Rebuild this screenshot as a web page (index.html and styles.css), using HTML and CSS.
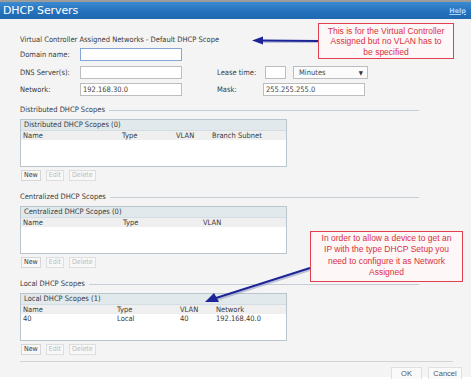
FILE: index.html
```html
<!DOCTYPE html>
<html>
<head>
<meta charset="utf-8">
<link rel="stylesheet" href="styles.css">
</head>
<body>
<div class="win">
  <div class="topstrip"></div>
  <div class="titlebar">
    <span class="title">DHCP Servers</span>
    <a class="help">Help</a>
  </div>
  <div class="panel">
    <div class="heading">Virtual Controller Assigned Networks - Default DHCP Scope</div>
    <div class="form">
      <div class="row">
        <span class="lbl">Domain name:</span><span class="inp focus"></span>
      </div>
      <div class="row">
        <span class="lbl">DNS Server(s):</span><span class="inp"></span>
        <span class="lbl2">Lease time:</span><span class="inp small"></span>
        <span class="select">Minutes<span class="caret">▼</span></span>
      </div>
      <div class="row">
        <span class="lbl">Network:</span><span class="inp">192.168.30.0</span>
        <span class="lbl2">Mask:</span><span class="inp">255.255.255.0</span>
      </div>
    </div>

    <div class="group first">
      <div class="legend"><span>Distributed DHCP Scopes</span><span class="rule"></span></div>
      <div class="grid">
        <div class="gtitle">Distributed DHCP Scopes (0)</div>
        <div class="ghead cols-dist"><span>Name</span><span>Type</span><span>VLAN</span><span>Branch Subnet</span></div>
      </div>
      <div class="btns"><span class="btn">New</span><span class="btn dis">Edit</span><span class="btn dis">Delete</span></div>
    </div>

    <div class="group">
      <div class="legend"><span>Centralized DHCP Scopes</span><span class="rule"></span></div>
      <div class="grid">
        <div class="gtitle">Centralized DHCP Scopes (0)</div>
        <div class="ghead cols-cent"><span>Name</span><span>Type</span><span>VLAN</span></div>
      </div>
      <div class="btns"><span class="btn">New</span><span class="btn dis">Edit</span><span class="btn dis">Delete</span></div>
    </div>

    <div class="group">
      <div class="legend"><span>Local DHCP Scopes</span><span class="rule"></span></div>
      <div class="grid">
        <div class="gtitle">Local DHCP Scopes (1)</div>
        <div class="ghead cols-local"><span>Name</span><span>Type</span><span>VLAN</span><span>Network</span></div>
        <div class="grow cols-local"><span>40</span><span>Local</span><span>40</span><span>192.168.40.0</span></div>
      </div>
      <div class="btns"><span class="btn">New</span><span class="btn dis">Edit</span><span class="btn dis">Delete</span></div>
    </div>

    <div class="sep"></div>
    <div class="footer"><span class="fbtn">OK</span><span class="fbtn cancel">Cancel</span></div>
  </div>

  <div class="callout c1">This is for the Virtual Controller<br>Assigned but no VLAN has to<br>be specified</div>
  <div class="callout c2">In order to allow a device to get an<br>IP with the type DHCP Setup you<br>need to configure it as Network<br>Assigned</div>

  <svg class="arrows" width="474" height="379" viewBox="0 0 474 379">
    <g stroke="#8a8fb8" stroke-width="2" opacity="0.5" fill="none">
      <line x1="318" y1="42" x2="262" y2="42"/>
      <line x1="310" y1="270" x2="216" y2="300"/>
    </g>
    <g stroke="#1b2597" stroke-width="2" fill="none">
      <line x1="318" y1="41" x2="262" y2="40.5"/>
      <line x1="310" y1="268" x2="216" y2="298"/>
    </g>
    <g fill="#1b2597">
      <polygon points="252,40.5 263,36.5 263,44.5"/>
      <polygon points="205,302 214,293 219,302"/>
    </g>
  </svg>
</div>
</body>
</html>
```

FILE: styles.css
```css
html, body {
  margin: 0;
  padding: 0;
  background: #ffffff;
}

body {
  width: 474px;
  height: 379px;
  overflow: hidden;
  font-family: "DejaVu Sans Condensed", "Liberation Sans", sans-serif;
  font-size: 7.5px;
  color: #3a3a3a;
}

.win {
  position: relative;
  width: 471px;
  height: 377px;
  background: #f4f4f4;
}

.topstrip {
  height: 2px;
  background: #9c9c9c;
}

.titlebar {
  height: 17px;
  background: linear-gradient(#3b8ad1, #2470bb 60%, #1f68b2);
  display: flex;
  align-items: center;
  justify-content: space-between;
  padding: 0 5px 0 3px;
}

.title {
  font-family: "DejaVu Sans", sans-serif;
  font-size: 11px;
  color: #ffffff;
  letter-spacing: -0.1px;
}

.help {
  font-family: "DejaVu Sans", sans-serif;
  font-size: 6.5px;
  font-weight: bold;
  color: #a8d4ff;
  text-decoration: underline;
}

.panel {
  padding-left: 20px;
  display: flex;
  flex-direction: column;
}

.heading {
  margin-top: 16px;
  height: 10px;
  line-height: 10px;
}

.form {
  margin-top: 3px;
  display: flex;
  flex-direction: column;
  gap: 4.5px;
}

.row {
  height: 13px;
  display: flex;
  align-items: center;
}

.lbl {
  width: 60px;
}

.lbl2 {
  margin-left: 35px;
  width: 46px;
}

.inp {
  box-sizing: border-box;
  width: 102px;
  height: 13px;
  border: 1px solid #bdbdbd;
  background: #ffffff;
  line-height: 11px;
  padding-left: 2px;
  color: #444;
}

.inp.focus {
  border-color: #86a6d8;
}

.inp.small {
  width: 21px;
  margin-left: 2px;
}

.select {
  box-sizing: border-box;
  margin-left: 7px;
  width: 75px;
  height: 13px;
  border: 1px solid #bdbdbd;
  background: #fbfbfb;
  line-height: 11px;
  padding-left: 5px;
  padding-right: 4px;
  display: flex;
  justify-content: space-between;
  color: #444;
}

.caret {
  font-size: 6px;
  color: #333;
}

.group {
  margin-top: 11px;
  display: flex;
  flex-direction: column;
}

.group.first {
  margin-top: 9px;
}

.legend {
  width: 399px;
  height: 10px;
  line-height: 10px;
  display: flex;
  align-items: center;
}

.rule {
  flex: 1;
  height: 1px;
  margin-left: 4px;
  background: #c6cdd4;
}

.grid {
  box-sizing: border-box;
  margin-top: 4px;
  width: 267px;
  height: 48px;
  border: 1px solid #b9c5cc;
  background: #ffffff;
}

.gtitle {
  height: 10px;
  line-height: 10px;
  padding-left: 3px;
  background: #e1e9ec;
  border-bottom: 1px solid #d3dde2;
}

.ghead, .grow {
  height: 9px;
  line-height: 9px;
  padding-left: 2px;
  display: grid;
}

.ghead {
  background: #efefef;
}

.cols-dist { grid-template-columns: 99px 54px 36px 1fr; }
.cols-cent { grid-template-columns: 100px 80px 1fr; }
.cols-local { grid-template-columns: 94px 63px 36px 1fr; }

.btns {
  margin-top: 3px;
  margin-left: 1px;
  height: 11px;
  display: flex;
  gap: 5px;
}

.btn {
  box-sizing: border-box;
  height: 11px;
  line-height: 9px;
  padding: 0 2px;
  border: 1px solid #d6d6d6;
  background: #f8f8f8;
  color: #333;
  font-size: 7px;
}

.btn.dis {
  color: #bcbcbc;
  border-color: #dedede;
}

.sep {
  margin-top: 6px;
  width: 433px;
  height: 1px;
  background: #cfd4d8;
}

.footer {
  margin-top: 5px;
  width: 442px;
  display: flex;
  justify-content: flex-end;
  gap: 6px;
}

.fbtn {
  box-sizing: border-box;
  width: 31px;
  height: 12px;
  line-height: 11px;
  text-align: center;
  border: 1px solid #e0e0e0;
  border-bottom: none;
  background: #fafafa;
  color: #555;
  font-family: "Liberation Sans", sans-serif;
  font-size: 7.5px;
}

.fbtn.cancel {
  width: 34px;
}

.callout {
  position: absolute;
  box-sizing: border-box;
  border: 1px solid #e2404e;
  background: #fdf7f7;
  color: #d9303f;
  font-family: "Liberation Sans", sans-serif;
  font-size: 8.5px;
  text-align: center;
}

.c1 {
  left: 318px;
  top: 23px;
  width: 136px;
  height: 36px;
  line-height: 10.3px;
  padding-top: 2px;
}

.c2 {
  left: 310px;
  top: 231px;
  width: 153px;
  height: 51px;
  line-height: 11.3px;
  padding-top: 1px;
}

.arrows {
  position: absolute;
  left: 0;
  top: 0;
  pointer-events: none;
}
```
